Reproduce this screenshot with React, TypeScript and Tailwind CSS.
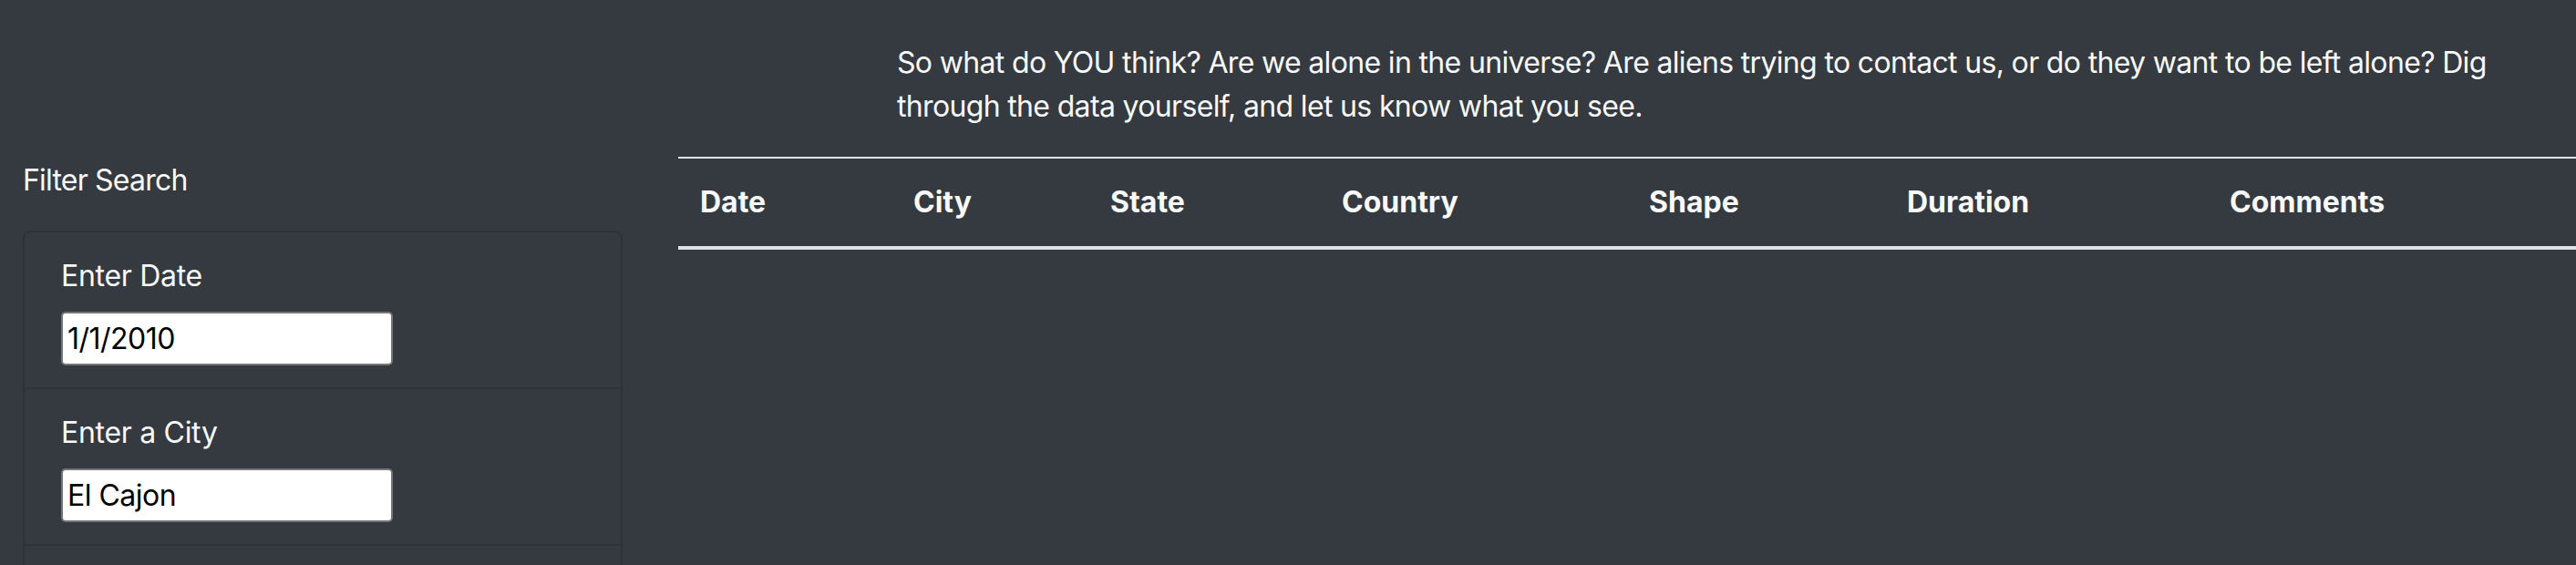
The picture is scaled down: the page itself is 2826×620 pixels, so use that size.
import { useState } from 'react'

const COLUMNS = [
  { label: 'Date', width: 'w-[234px]' },
  { label: 'City', width: 'w-[216px]' },
  { label: 'State', width: 'w-[254px]' },
  { label: 'Country', width: 'w-[337px]' },
  { label: 'Shape', width: 'w-[283px]' },
  { label: 'Duration', width: 'w-[354px]' },
  { label: 'Comments', width: 'w-[404px]' },
]

interface FilterFieldProps {
  id: string
  label: string
  value: string
  onChange: (v: string) => void
}

function FilterField({ id, label, value, onChange }: FilterFieldProps) {
  return (
    <li className="border-b-2 border-black/[0.125] px-[40px] py-[24px]">
      <label htmlFor={id} className="mb-[15px] block leading-[48px] tracking-[-0.3px]">
        {label}
      </label>
      <input
        id={id}
        type="text"
        value={value}
        onChange={(e) => onChange(e.target.value)}
        className="block h-[59px] w-[364px] rounded-[5px] border-2 border-[#767676] bg-white px-[5px] text-[32px] tracking-[-0.5px] text-black outline-none"
      />
    </li>
  )
}

export default function App() {
  const [date, setDate] = useState('1/1/2010')
  const [city, setCity] = useState('El Cajon')

  return (
    <div className="h-[620px] w-full overflow-hidden bg-[#343a40] font-[Inter,'Liberation_Sans',sans-serif] text-[32px] leading-[48px] text-[#f8f9fa]">
      <p className="mb-[31px] ml-[984px] mr-[60px] pt-[45px] tracking-[-0.66px]">
        So what do YOU think? Are we alone in the universe? Are aliens trying to contact us, or do
        they want to be left alone? Dig through the data yourself, and let us know what you see.
      </p>

      <div className="flex">
        {/* Sidebar */}
        <aside className="w-[683px] shrink-0 pl-[25px]">
          <h5 className="mb-[31px] pt-[2px] font-normal leading-[48px] tracking-[-0.8px]">
            Filter Search
          </h5>
          <ul className="rounded-[8px] border-2 border-black/[0.125]">
            <FilterField id="datetime" label="Enter Date" value={date} onChange={setDate} />
            <FilterField id="city" label="Enter a City" value={city} onChange={setCity} />
            <li className="h-[174px]" />
          </ul>
        </aside>

        {/* Results table */}
        <div className="ml-[61px] flex-1">
          <table className="w-full table-fixed border-collapse">
            <thead>
              <tr className="border-t-2 border-b-4 border-[#dee2e6]">
                {COLUMNS.map((col) => (
                  <th key={col.label} className={`${col.width} p-[24px] text-left font-bold`}>
                    {col.label}
                  </th>
                ))}
              </tr>
            </thead>
            <tbody />
          </table>
        </div>
      </div>
    </div>
  )
}
